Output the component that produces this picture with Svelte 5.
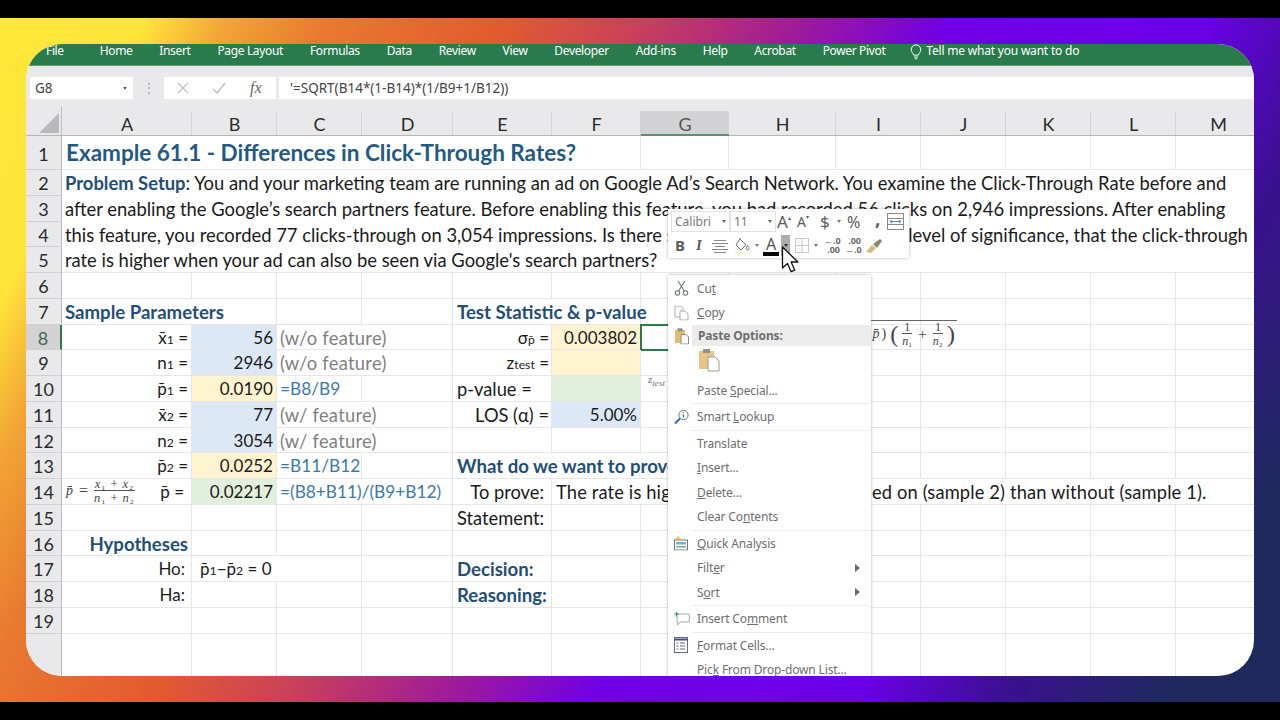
<script>
  const colNames = ['A','B','C','D','E','F','G','H','I','J','K','L','M'];
  const L = (base, sub, rest, extra = {}) => ({ base, sub, rest, ...extra });

  const spec = {
    1: [{ c: 0, span: 6, base: 'Example 61.1 - Differences in Click-Through Rates?', cls: 'title' }],
    7: [
      { c: 0, span: 2, base: 'Sample Parameters', cls: 'head' },
      { c: 4, span: 2, base: 'Test Statistic & p-value', cls: 'head tight' }
    ],
    8: [
      L('x̄', '1', ' =', { c: 0, cls: 'right' }),
      { c: 1, base: '56', cls: 'right blue' },
      { c: 2, span: 2, base: '(w/o feature)', cls: 'note' },
      L('σ', 'p̄', ' =', { c: 4, cls: 'right e' }),
      { c: 5, base: '0.003802', cls: 'right yellow' },
      { c: 6, cls: 'active' }
    ],
    9: [
      L('n', '1', ' =', { c: 0, cls: 'right' }),
      { c: 1, base: '2946', cls: 'right blue' },
      { c: 2, span: 2, base: '(w/o feature)', cls: 'note' },
      L('z', 'test', ' =', { c: 4, cls: 'right e' }),
      { c: 5, cls: 'yellow' }
    ],
    10: [
      L('p̄', '1', ' =', { c: 0, cls: 'right' }),
      { c: 1, base: '0.0190', cls: 'right yellow' },
      { c: 2, base: '=B8/B9', cls: 'fx' },
      { c: 4, base: 'p-value =', cls: 'left wide' },
      { c: 5, cls: 'green' }
    ],
    11: [
      L('x̄', '2', ' =', { c: 0, cls: 'right' }),
      { c: 1, base: '77', cls: 'right blue' },
      { c: 2, span: 2, base: '(w/ feature)', cls: 'note' },
      { c: 4, base: 'LOS (α) =', cls: 'right e wide' },
      { c: 5, base: '5.00%', cls: 'right blue' }
    ],
    12: [
      L('n', '2', ' =', { c: 0, cls: 'right' }),
      { c: 1, base: '3054', cls: 'right blue' },
      { c: 2, span: 2, base: '(w/ feature)', cls: 'note' }
    ],
    13: [
      L('p̄', '2', ' =', { c: 0, cls: 'right' }),
      { c: 1, base: '0.0252', cls: 'right yellow' },
      { c: 2, base: '=B11/B12', cls: 'fx' },
      { c: 4, span: 3, base: 'What do we want to prove?', cls: 'head tight' }
    ],
    14: [
      { c: 0, cls: 'pbar', formula: true },
      { c: 1, base: '0.02217', cls: 'right green' },
      { c: 2, span: 2, base: '=(B8+B11)/(B9+B12)', cls: 'fx' },
      { c: 4, base: 'To prove:', cls: 'right prove wide' },
      { c: 5, span: 8, base: 'The rate is higher with the feature turned on (sample 2) than without (sample 1).', cls: 'left wide proveText' }
    ],
    15: [{ c: 4, base: 'Statement:', cls: 'left wide' }],
    16: [{ c: 0, base: 'Hypotheses', cls: 'head right' }],
    17: [
      { c: 0, base: 'Ho:', cls: 'right hyp' },
      { c: 1, span: 2, base: 'p̄', sub: '1', rest: '−p̄', sub2: '2', rest2: ' = 0', cls: 'left hypv' },
      { c: 4, base: 'Decision:', cls: 'head tight' }
    ],
    18: [
      { c: 0, base: 'Ha:', cls: 'right hyp' },
      { c: 4, base: 'Reasoning:', cls: 'head tight' }
    ]
  };

  function cellsFor(n) {
    const s = spec[n] || [];
    const out = [];
    for (let c = 0; c < 13; ) {
      const hit = s.find((x) => x.c === c);
      if (hit) {
        out.push({ span: 1, ...hit });
        c += hit.span || 1;
      } else {
        out.push({ span: 1, cls: '' });
        c += 1;
      }
    }
    return out;
  }

  const rowNums = Array.from({ length: 19 }, (_, i) => i + 1);
  const setup = [
    ['Problem Setup', ': You and your marketing team are running an ad on Google Ad’s Search Network. You examine the Click-Through Rate before and'],
    ['', 'after enabling the Google’s search partners feature. Before enabling this feature, you had recorded 56 clicks on 2,946 impressions. After enabling'],
    ['', 'this feature, you recorded 77 clicks-through on 3,054 impressions. Is there sufficient evidence, at the 5% level of significance, that the click-through'],
    ['', 'rate is higher when your ad can also be seen via Google\'s search partners?']
  ];

  const tabs = ['File','Home','Insert','Page Layout','Formulas','Data','Review','View','Developer','Add-ins','Help','Acrobat','Power Pivot'];

  const menu = [
    { k: 'item', pre: 'Cu', u: 't', post: '', icon: 'cut' },
    { k: 'item', pre: '', u: 'C', post: 'opy', icon: 'copy' },
    { k: 'paste' },
    { k: 'icons' },
    { k: 'item', pre: 'Paste ', u: 'S', post: 'pecial...' },
    { k: 'sep' },
    { k: 'item', pre: 'Smart ', u: 'L', post: 'ookup', icon: 'lookup' },
    { k: 'sep' },
    { k: 'item', pre: 'Translate', u: '', post: '' },
    { k: 'item', pre: '', u: 'I', post: 'nsert...' },
    { k: 'item', pre: '', u: 'D', post: 'elete...' },
    { k: 'item', pre: 'Clear Co', u: 'n', post: 'tents' },
    { k: 'sep' },
    { k: 'item', pre: '', u: 'Q', post: 'uick Analysis', icon: 'quick' },
    { k: 'item', pre: 'Filt', u: 'e', post: 'r', arrow: true },
    { k: 'item', pre: 'S', u: 'o', post: 'rt', arrow: true },
    { k: 'sep' },
    { k: 'item', pre: 'Insert Co', u: 'm', post: 'ment', icon: 'comment' },
    { k: 'sep' },
    { k: 'item', pre: '', u: 'F', post: 'ormat Cells...', icon: 'format' },
    { k: 'item', pre: 'Pic', u: 'k', post: ' From Drop-down List...' }
  ];
</script>

<div class="page">
  <div class="band">
    <div class="window">
      <nav class="ribbon">
        {#each tabs as t}<span class:filetab={t === 'File'}>{t}</span>{/each}
        <span class="tell">
          <svg width="14" height="16" viewBox="0 0 14 18" fill="none" stroke="#fff" stroke-width="1.1"><path d="M7 1a5.4 5.4 0 0 0-5.4 5.4c0 2.4 1.9 3.6 2.7 6.1h5.4c.8-2.5 2.7-3.7 2.7-6.1A5.4 5.4 0 0 0 7 1zM4.8 14.6h4.4M5.6 16.6h2.8"/></svg>
          Tell me what you want to do
        </span>
      </nav>

      <div class="fbar">
        <div class="namebox"><span>G8</span><i class="caret"></i></div>
        <div class="dots">⋮</div>
        <div class="fxbox">
          <svg width="14" height="14" viewBox="0 0 14 14" stroke="#c4c4c4" stroke-width="1.4" fill="none"><path d="M2 2l10 10M12 2L2 12"/></svg>
          <svg width="16" height="14" viewBox="0 0 16 14" stroke="#c4c4c4" stroke-width="1.6" fill="none"><path d="M2 8l4 4 8-10"/></svg>
          <em>fx</em>
        </div>
        <div class="formula">'=SQRT(B14*(1-B14)*(1/B9+1/B12))</div>
      </div>

      <div class="sheet">
        <div class="corner"><svg width="22" height="22" viewBox="0 0 22 22"><path d="M21 1v20H1z" fill="#b9b9bb"/></svg></div>
        {#each colNames as c}
          <div class="ch" class:sel={c === 'G'}>{c}</div>
        {/each}

        {#each rowNums as n}
          <div class="rh" class:sel={n === 8} class:one={n === 1}>{n}</div>
          {#if n === 2}
            <div class="cell merged">
              {#each setup as line}
                <div class="line"><b>{line[0]}</b>{line[1]}</div>
              {/each}
            </div>
          {:else if n < 3 || n > 5}
            {#each cellsFor(n) as c}
              <div class="cell {c.cls}" style:grid-column="span {c.span}">
                {#if c.formula}
                  <span class="math mathp">
                    <i>p̄</i><span class="eq">=</span>
                    <span class="frac"><span><i>x</i>₁ + <i>x</i>₂</span><span><i>n</i>₁ + <i>n</i>₂</span></span>
                  </span>
                  <span class="plabel">p̄ =</span>
                {:else}
                  {c.base ?? ''}{#if c.sub}<small>{c.sub}</small>{/if}{c.rest ?? ''}{#if c.sub2}<small>{c.sub2}</small>{/if}{c.rest2 ?? ''}
                {/if}
              </div>
            {/each}
          {/if}
        {/each}

        <div class="rh end"></div>
        {#each colNames as c}<div class="cell end"></div>{/each}

        <span class="math ztest"><i>z</i><sub><i>test</i></sub> = (p̄₂ − p̄₁)</span>
        <span class="math sigma">
          <span class="over"><i>σ</i> = √ <i>p̄</i>(1 − <i>p̄</i>)<span class="paren">(</span><span class="frac"><span>1</span><span><i>n</i>₁</span></span><span class="plus">+</span><span class="frac"><span>1</span><span><i>n</i>₂</span></span><span class="paren">)</span></span>
        </span>
      </div>

      <div class="mini">
        <div class="mrow">
          <div class="combo font">Calibri<i class="caret"></i></div>
          <div class="combo size">11<i class="caret"></i></div>
          <span class="g big">A<sup>▴</sup></span>
          <span class="g small">A<sup>▾</sup></span>
          <span class="g dollar">$</span><i class="caret soft c1"></i>
          <span class="g pct">%</span>
          <span class="g comma">,</span>
          <svg class="wrap" width="17" height="17" viewBox="0 0 17 17" fill="none" stroke="#8a8a8a"><rect x=".5" y=".5" width="16" height="16"/><path d="M.5 5.5h16M.5 11.5h16"/><path d="M3 8.5h11M5 7l-2 1.5L5 10M12 7l2 1.5L12 10" stroke="#5b87b5"/></svg>
        </div>
        <div class="mrow second">
          <span class="g bold">B</span>
          <span class="g ital">I</span>
          <svg class="align" width="16" height="14" viewBox="0 0 16 14" stroke="#8a8a8a" fill="none"><path d="M2 1.5h12M0 4.5h16M3 7.5h10M0 10.5h16M2 13.5h12"/></svg>
          <svg class="bucket" width="16" height="17" viewBox="0 0 16 17" fill="none" stroke="#6f6f6f"><path d="M6 2l6 6-5 5-5-5z"/><path d="M6 2V.8M13.5 8.5c1 1.5 1.5 2.2 1.5 3a1.4 1.4 0 0 1-2.8 0c0-.6.4-1.3 1.3-3z" /><path d="M1 16h10" stroke="#f7f3c8" stroke-width="2"/></svg>
          <i class="caret soft c2"></i>
          <span class="fontcolor"><span>A</span><i></i></span>
          <span class="dropsel"><i class="caret"></i></span>
          <svg class="borders" width="14" height="15" viewBox="0 0 14 15" fill="none" stroke="#c9c9c9"><rect x=".5" y=".5" width="13" height="14"/><path d="M7 0v15M0 7.5h14"/></svg>
          <i class="caret soft c2"></i>
          <span class="dec d1"><span><em>←</em>.0</span><span>.00</span></span>
          <span class="dec d2"><span>.00</span><span><em>→</em>.0</span></span>
          <svg class="brush" width="18" height="16" viewBox="0 0 18 16"><path d="M1 14l6-7 4 3-5 5z" fill="#d0bd7a"/><path d="M8 6l7-5 2 2-5 7z" fill="#8a8a6a"/></svg>
        </div>
      </div>

      <div class="menu">
        {#each menu as m}
          {#if m.k === 'sep'}
            <div class="sep"></div>
          {:else if m.k === 'paste'}
            <div class="pasteh">
              <svg class="ico pasteico" width="16" height="17" viewBox="0 0 16 17"><rect x="1" y="2.5" width="10" height="13" fill="#e3bd72"/><rect x="3.5" y=".8" width="5" height="3" fill="#8f8f8f"/><path d="M7 7h5l2.5 2.5v7H7z" fill="#fff" stroke="#8a8a8a"/></svg>
              <span>Paste Options:</span>
            </div>
          {:else if m.k === 'icons'}
            <div class="iconsrow">
              <svg width="22" height="24" viewBox="0 0 22 24"><rect x="1" y="3" width="15" height="18" fill="#e8c583"/><rect x="5" y="1" width="7" height="4" fill="#8f8f8f"/><path d="M10 9h7l4 4v10H10z" fill="#fff" stroke="#9a9a9a"/></svg>
            </div>
          {:else}
            <div class="item">
              {#if m.icon === 'cut'}
                <svg class="ico" width="15" height="16" viewBox="0 0 15 16" fill="none" stroke="#6f7478" stroke-width="1.1"><circle cx="3.5" cy="13" r="2.2"/><circle cx="11.5" cy="13" r="2.2"/><path d="M4.6 11L11 1M10.4 11L4 1"/></svg>
              {:else if m.icon === 'copy'}
                <svg class="ico" width="15" height="15" viewBox="0 0 15 15" fill="#fff" stroke="#aaa"><path d="M1 .5h6l2 2v9H1z"/><path d="M6 5.5h5l3 3v6H6z"/></svg>
              {:else if m.icon === 'lookup'}
                <svg class="ico" width="15" height="15" viewBox="0 0 15 15" fill="none"><circle cx="9.5" cy="5.5" r="4.6" stroke="#6f7478"/><path d="M6 9l-5 5" stroke="#2f6ea8" stroke-width="2"/><path d="M9.5 2.8v.9M9.5 5v3.2" stroke="#2f6ea8" stroke-width="1.2"/></svg>
              {:else if m.icon === 'quick'}
                <svg class="ico" width="15" height="15" viewBox="0 0 15 15" fill="none"><rect x=".5" y="4.5" width="13" height="10" fill="#fff" stroke="#6f7478"/><rect x="2" y="6.5" width="10" height="2.5" fill="#6fb3c4"/><rect x="2" y="10.5" width="10" height="1.5" fill="#7ab08a"/><path d="M4 0l1 2.5L7.5 3 5 4 4 6.5 3 4 .5 3 3 2.5z" fill="#e6b84f"/></svg>
              {:else if m.icon === 'comment'}
                <svg class="ico" width="16" height="15" viewBox="0 0 16 15" fill="none"><path d="M3 2.5h12.3v8H6l-2.5 3v-3H3z" fill="#fff" stroke="#aaa"/><path d="M2.5 0v5M0 2.5h5" stroke="#3f9a74" stroke-width="1.2"/></svg>
              {:else if m.icon === 'format'}
                <svg class="ico" width="14" height="16" viewBox="0 0 14 16" fill="#fff" stroke="#5a6b85"><rect x=".5" y=".5" width="13" height="15"/><path d="M.5 2.5h13" stroke="#33527d" stroke-width="2"/><path d="M2.5 6h2M6 6h5M2.5 9h2M6 9h5M2.5 12h2M6 12h5"/></svg>
              {/if}
              <span class="lbl">{m.pre}{#if m.u}<u>{m.u}</u>{/if}{m.post}</span>
              {#if m.arrow}<i class="arr"></i>{/if}
            </div>
          {/if}
        {/each}
      </div>

      <svg class="cursor" width="20" height="28" viewBox="0 0 20 28"><path d="M1.5 1v21l5-4.6 3.6 8.3 3.6-1.6-3.6-8.1h6.8z" fill="#fff" stroke="#111" stroke-width="1.3" stroke-linejoin="round"/></svg>
    </div>
  </div>
</div>

<style>
  :global(body) { margin: 0; background: #000; }
  .page {
    width: 1280px; height: 720px; background: #000;
    padding: 18px 0; box-sizing: border-box;
    font-family: Lato, "Liberation Sans", sans-serif;
  }
  .band {
    height: 684px; box-sizing: border-box; padding: 26px 26px;
    background: linear-gradient(117.5deg, #ffe83a 0%, #ffe43a 9%, #f2a535 14%, #e87a30 20%, #e35a30 31%, #c94258 39%, #a01a9a 49%, #7000e6 58%, #6a00e6 74%, #3a1090 83%, #1e2a5e 93%, #1e2a5e 100%);
  }
  .window {
    position: relative; width: 1228px; height: 632px; overflow: hidden;
    background: #fff; border-radius: 36px;
    display: flex; flex-direction: column;
  }

  .ribbon {
    height: 22px; flex: none; background: #2a7b4b; color: #fff;
    display: flex; align-items: flex-start; gap: 26.9px; padding: 0 0 0 20px; box-sizing: border-box;
    font: 12px/14px "Noto Sans", sans-serif; letter-spacing: -.35px; white-space: nowrap;
    border-bottom: 1px solid #5f9f78;
  }
  .filetab { margin-right: 9px; }
  .tell { display: flex; align-items: flex-start; gap: 3px; margin-left: -3px; letter-spacing: -.2px; }

  .fbar {
    height: 40px; flex: none; background: #e9e9eb; box-sizing: border-box;
    display: flex; align-items: flex-start; padding-top: 11px;
    font: 13.5px "Noto Sans", sans-serif; color: #444;
  }
  .namebox, .fxbox, .formula { background: #fff; height: 22px; display: flex; align-items: center; }
  .namebox { width: 103px; margin-left: 4px; padding: 0 6px 0 5px; box-sizing: border-box; justify-content: space-between; }
  .dots { width: 31px; text-align: center; color: #aaa; line-height: 22px; }
  .fxbox { width: 112px; gap: 21px; padding-left: 12px; box-sizing: border-box; }
  .fxbox em { font: italic 16px "Liberation Serif", serif; color: #666; margin-left: 2px; }
  .formula { flex: 1; margin-left: 3px; padding-left: 11px; }
  .caret {
    display: inline-block; width: 0; height: 0;
    border-left: 2.5px solid transparent; border-right: 2.5px solid transparent; border-top: 3px solid #666;
  }
  .caret.soft { border-top-color: #777; }

  .sheet {
    position: relative; flex: 1; min-height: 0;
    display: grid;
    grid-template-columns: 36px 130px 85px 85px 91px 99px 89px 88px 107px 85px 85px 85px 85px 85px;
    grid-template-rows: 30px 34px repeat(18, 25.75px) 1fr;
    font-size: 17px; color: #1a1a1a; line-height: 26px;
  }
  .corner { background: #e9e9eb; border-bottom: 1px solid #b5b5b5; border-right: 1px solid #bdbdbd; box-sizing: border-box; display: flex; align-items: flex-end; justify-content: flex-end; padding: 0 1px 1px 0; }
  .ch {
    position: relative; background: #e9e9eb; text-align: center; font-size: 18px; color: #2b2b2b;
    border-bottom: 1px solid #b5b5b5; box-sizing: border-box; line-height: 37px; overflow: hidden;
  }
  .ch::after { content: ''; position: absolute; right: 0; top: 5px; bottom: 0; width: 1px; background: #d4d4d6; }
  .ch.sel { background: linear-gradient(#e9e9eb 5px, #d3d3d5 5px); color: #555; border-bottom: 2px solid #5f8f76; }
  .rh {
    background: #e9e9eb; text-align: center; font-size: 18px; color: #2b2b2b; line-height: 26px;
    border-bottom: 1px solid #d0d0d2; border-right: 1px solid #bdbdbd; box-sizing: border-box;
  }
  .rh.one { line-height: 37px; }
  .rh.sel { background: #d3d3d5; color: #3f6a54; border-right: 2px solid #2a7b4b; }
  .rh.end { border-bottom: 0; }

  .cell {
    border-right: 1px solid #e6e6e6; border-bottom: 1px solid #e6e6e6;
    box-sizing: border-box; white-space: nowrap; padding: 0 3px; min-width: 0;
  }
  .cell.end { border-bottom: 0; }
  .merged { grid-column: span 13; grid-row: span 4; padding: 0 0 0 3px; border-right: 0; font-size: 18.4px; }
  .line { height: 25.75px; line-height: 26px; }
  .line b { color: #1f4e79; }
  .title { font-size: 22.5px; font-weight: 700; color: #1f5a85; line-height: 34px; padding-left: 4px; }
  .head { font-weight: 700; color: #1f4e79; font-size: 18.6px; }
  .tight { padding-left: 4px; }
  .right { text-align: right; }
  .left { text-align: left; }
  .wide { font-size: 18.3px; }
  .left.wide { padding-left: 4px; }
  .proveText { letter-spacing: .15px; }
  .e { padding-right: 2px; }
  .prove { padding-right: 7px; }
  .hyp { padding-right: 6px; }
  .hypv { padding-left: 8px; }
  .blue { background: #dde8f6; }
  .yellow { background: #fff3d0; }
  .green { background: #e3efdd; }
  .note { color: #7f7f7f; font-size: 18.4px; letter-spacing: .25px; }
  .fx { color: #3b79a8; font-size: 17.3px; }
  .cell small { font-size: .72em; }
  .active { outline: 2px solid #2a7b4b; outline-offset: -1px; }
  .pbar { display: flex; justify-content: space-between; padding: 0 7px 0 4px; }
  .math { font-family: "Liberation Serif", serif; color: #555; font-size: 12px; white-space: nowrap; line-height: 1; }
  .mathp { display: inline-flex; align-items: center; gap: 5px; font-size: 14px; color: #444; }
  .eq { font-size: 16px; margin-left: 1px; }
  .frac { display: inline-flex; flex-direction: column; align-items: center; font-size: 12px; vertical-align: middle; }
  .mathp .frac { font-size: 12.5px; letter-spacing: .9px; margin-left: 1px; }
  .frac span + span { border-top: 1px solid #555; padding-top: 1px; }
  .plabel { color: #1a1a1a; }
  .ztest { position: absolute; left: 622px; top: 268px; font-size: 11px; color: #777; }
  .sigma { position: absolute; right: 297px; top: 214px; font-size: 14px; color: #444; }
  .over { display: inline-flex; align-items: center; gap: 2px; border-top: 1px solid #666; height: 26px; }
  .paren { font-size: 24px; font-weight: 300; line-height: 1; margin: 0 2px; }
  .plus { margin: 0 4px; font-size: 15px; }

  .mini {
    position: absolute; left: 642px; top: 165px; width: 241px; height: 49px;
    background: #fff; box-shadow: 0 0 3px rgba(0,0,0,.3); box-sizing: border-box; padding: 1px 3px;
    color: #5c5c5c;
  }
  .mrow { display: flex; align-items: center; height: 23px; font: 12px "Noto Sans", sans-serif; }
  .combo { height: 21px; box-sizing: border-box; border: 1px solid #e2e2e2; display: flex; align-items: center; justify-content: space-between; padding: 0 3px; color: #777; }
  .font { width: 59px; }
  .size { width: 46px; }
  .g { display: inline-block; line-height: 1; flex: none; }
  .big { font-size: 17px; margin-left: 1px; width: 19px; }
  .small { font-size: 14px; margin-left: 1px; width: 18px; }
  .big sup, .small sup { font-size: 6px; vertical-align: 8px; }
  .dollar { font-size: 17px; margin-left: 5px; width: 11px; }
  .c1 { margin-left: 6px; }
  .pct { font-size: 16px; margin-left: 6px; width: 15px; }
  .comma { font-size: 19px; font-weight: 700; margin: -7px 0 0 13px; width: 7px; }
  .wrap { margin-left: 5px; flex: none; }
  .second { margin-top: 1px; }
  .bold { font-weight: 700; font-size: 15px; margin-left: 4px; width: 11px; }
  .ital { font-style: italic; font-size: 15px; font-family: "Liberation Serif", serif; font-weight: 700; margin-left: 10px; width: 8px; }
  .align { margin-left: 8px; flex: none; }
  .bucket { margin-left: 6px; flex: none; }
  .c2 { margin-left: 5px; flex: none; }
  .fontcolor { margin-left: 4px; width: 16px; flex: none; display: flex; flex-direction: column; align-items: center; font-size: 16px; line-height: 16px; color: #555; }
  .fontcolor i { display: block; width: 16px; height: 4px; background: #000; }
  .dropsel { background: #adadad; width: 9px; height: 21px; flex: none; display: flex; align-items: center; justify-content: center; margin-left: 2px; }
  .dropsel .caret { border-top-color: #333; }
  .borders { margin-left: 5px; flex: none; }
  .dec { display: inline-flex; flex-direction: column; font-size: 9px; font-weight: 700; line-height: 8.5px; text-align: right; color: #6a6a6a; width: 16px; flex: none; white-space: nowrap; }
  .d1 { margin-left: 6px; }
  .d2 { margin-left: 5px; }
  .dec em { font-style: normal; color: #3e6f9e; }
  .brush { margin-left: 4px; flex: none; }

  .menu {
    position: absolute; left: 642px; top: 231px; width: 203px;
    background: #fff; box-shadow: 0 0 3px rgba(0,0,0,.3); padding-top: 1px;
    font: 12px "Noto Sans", sans-serif; color: #6e6e6e; letter-spacing: -.15px;
  }
  .item { position: relative; height: 24.5px; display: flex; align-items: center; padding-left: 29px; }
  .ico { position: absolute; left: 6px; top: 50%; transform: translateY(-50%); }
  .pasteh { position: relative; height: 21px; margin-left: 24px; background: #ececec; display: flex; align-items: center; padding-left: 6px; font-weight: 700; }
  .pasteico { left: -18px; }
  .iconsrow { height: 32px; padding: 2px 0 0 30px; box-sizing: border-box; }
  .sep { height: 1px; margin: .5px 0 .5px 24px; background: #ededed; }
  .arr { position: absolute; right: 11px; top: 8px; width: 0; height: 0; border-top: 4px solid transparent; border-bottom: 4px solid transparent; border-left: 5px solid #666; }
  .cursor { position: absolute; left: 755px; top: 202px; }
</style>
